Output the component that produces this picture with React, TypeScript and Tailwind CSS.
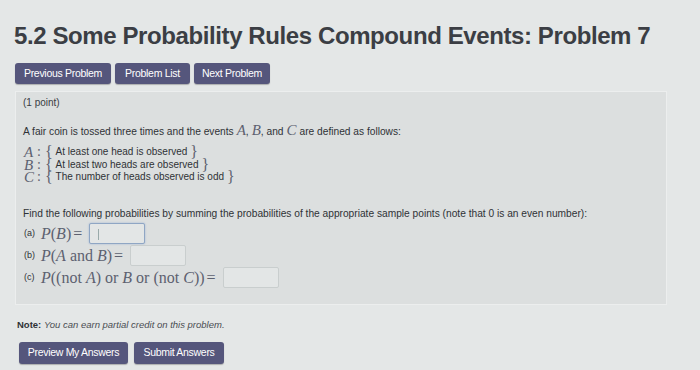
import React from 'react';

const sans = { fontFamily: '"Liberation Sans", Arial, sans-serif' };
const serif = "font-['Liberation_Serif',serif]";

const NavButton = ({ label, w, h = 'h-[21px]' }: { label: string; w: string; h?: string }) => (
  <button
    className={`${w} ${h} rounded-[3px] bg-[#55567c] text-white text-[10.5px] tracking-[-0.3px] shadow-[0_1px_1px_rgba(0,0,0,0.25)] flex items-center justify-center`}
  >
    {label}
  </button>
);

const AnswerBox = ({ active }: { active?: boolean }) => (
  <span
    className={`block w-[56px] h-[21px] bg-[#e3e6e6] border ${
      active ? 'border-[#8fa6c4] shadow-[0_0_2px_#9bb3d6]' : 'border-[#c9cece]'
    } rounded-[2px] relative`}
  >
    {active && <span className="absolute left-[8px] top-[5px] w-px h-[11px] bg-[#9aa]"></span>}
  </span>
);

const Event = ({ name, text }: { name: string; text: string }) => (
  <div className="flex items-center h-[12.5px] leading-[12px]">
    <span className={`${serif} italic text-[15px] text-[#5d6170] w-[12px]`}>{name}</span>
    <span className={`${serif} text-[14px] text-[#5d6170] ml-[1px]`}>:</span>
    <span className={`${serif} text-[16px] text-[#5d6170] ml-[4px]`}>{'{'}</span>
    <span className="text-[10px] text-[#2f3236] ml-[3px]">{text}</span>
    <span className={`${serif} text-[16px] text-[#5d6170] ml-[3px]`}>{'}'}</span>
  </div>
);

const Eq = () => <span className="ml-[2px]">=</span>;

export default function App() {
  return (
    <div className="w-[700px] h-[370px] bg-[#e4e7e7] overflow-hidden text-[#2f3236]" style={sans}>
      <h1 className="pl-[14px] pt-[21px] text-[24px] leading-[30px] font-bold text-[#3b3e44] tracking-[-0.4px] whitespace-nowrap">
        5.2 Some Probability Rules Compound Events: Problem 7
      </h1>
      <div className="flex gap-[4px] pl-[15px] mt-[12px]">
        <NavButton label="Previous Problem" w="w-[96px]" />
        <NavButton label="Problem List" w="w-[75px]" />
        <NavButton label="Next Problem" w="w-[76px]" />
      </div>
      <div className="ml-[15px] mt-[7px] w-[652px] h-[214px] bg-[#dcdfdf] border border-[#eceeee] px-[7px]">
        <div className="text-[10px] leading-[12px] mt-[5px] text-[#3a3d42]">(1 point)</div>
        <div className="text-[10.2px] leading-[16px] h-[16px] mt-[13px] flex items-baseline gap-[3px] whitespace-nowrap">
          <span>A fair coin is tossed three times and the events</span>
          <span className={`${serif} italic text-[15px] text-[#5d6170]`}>A</span>
          <span className="-ml-[3px]">,</span>
          <span className={`${serif} italic text-[15px] text-[#5d6170]`}>B</span>
          <span className="-ml-[3px]">, and</span>
          <span className={`${serif} italic text-[15px] text-[#5d6170]`}>C</span>
          <span>are defined as follows:</span>
        </div>
        <div className="mt-[8px] ml-[1px]">
          <Event name="A" text="At least one head is observed" />
          <Event name="B" text="At least two heads are observed" />
          <Event name="C" text="The number of heads observed is odd" />
        </div>
        <div className="text-[10.2px] leading-[14px] mt-[23px] whitespace-nowrap">
          Find the following probabilities by summing the probabilities of the appropriate sample points (note that 0 is an even number):
        </div>
        <div className="mt-[2px] flex flex-col">
          <div className="flex items-center h-[22px]">
            <span className="text-[9px] w-[17px] ml-[1px]">(a)</span>
            <span className={`${serif} text-[16px] leading-none text-[#5d6170]`}>
              <i>P</i>(<i>B</i>)<Eq />
            </span>
            <span className="ml-[7px]"><AnswerBox active /></span>
          </div>
          <div className="flex items-center h-[22px]">
            <span className="text-[9px] w-[17px] ml-[1px]">(b)</span>
            <span className={`${serif} text-[16px] leading-none text-[#5d6170]`}>
              <i>P</i>(<i>A</i> and <i>B</i>)<Eq />
            </span>
            <span className="ml-[7px]"><AnswerBox /></span>
          </div>
          <div className="flex items-center h-[22px]">
            <span className="text-[9px] w-[17px] ml-[1px]">(c)</span>
            <span className={`${serif} text-[16px] leading-none text-[#5d6170]`}>
              <i>P</i>((not <i>A</i>) or <i>B</i> or (not <i>C</i>))<Eq />
            </span>
            <span className="ml-[7px]"><AnswerBox /></span>
          </div>
        </div>
      </div>
      <div className="pl-[17px] mt-[14px] text-[9.5px] leading-[12px]">
        <span className="font-bold">Note:</span>{' '}
        <span className="italic text-[#4a4d52]">You can earn partial credit on this problem.</span>
      </div>
      <div className="flex gap-[6px] pl-[19px] mt-[11px]">
        <NavButton label="Preview My Answers" w="w-[109px]" h="h-[22px]" />
        <NavButton label="Submit Answers" w="w-[90px]" h="h-[22px]" />
      </div>
    </div>
  );
}
